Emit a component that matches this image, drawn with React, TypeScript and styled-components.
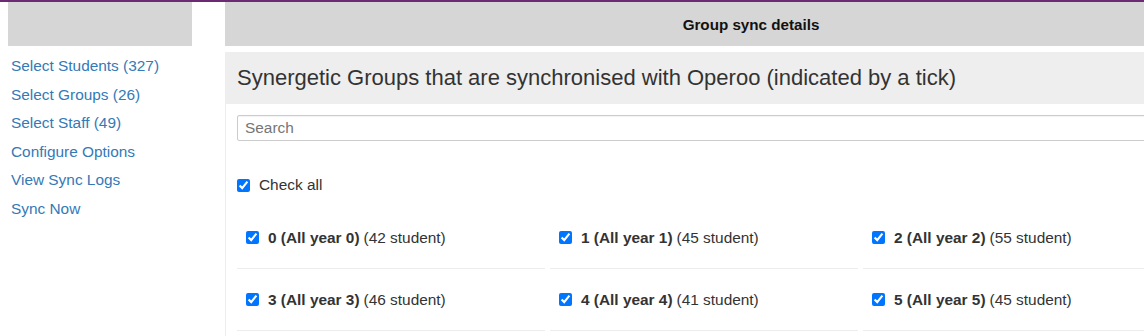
import React from "react";
import styled, { createGlobalStyle } from "styled-components";

const Global = createGlobalStyle`
  html, body { margin: 0; padding: 0; overflow: hidden; background: #fff; }
  body { font-family: "Liberation Sans", Arial, sans-serif; font-size: 15.4px; color: #333; }
`;

const TopBar = styled.div`
  height: 2px;
  background: #6c2a72;
`;

const Layout = styled.div`
  display: flex;
  align-items: flex-start;
  padding-left: 8px;
`;

const Sidebar = styled.nav`
  width: 184px;
  flex: none;
  margin-right: 33px;
`;

const SideHead = styled.div`
  height: 44px;
  background: #d6d6d6;
`;

const LinkList = styled.ul`
  list-style: none;
  margin: 6px 0 0;
  padding: 0;
`;

const SideLink = styled.a`
  display: block;
  padding-left: 3px;
  line-height: 28.6px;
  font-size: 15.4px;
  color: #337ab7;
  text-decoration: none;
  white-space: nowrap;
`;

const Main = styled.main`
  width: 1052px;
  flex: none;
`;

const PanelHead = styled.div`
  height: 44px;
  background: #d6d6d6;
  display: flex;
  align-items: center;
  justify-content: center;
  font-weight: bold;
  font-size: 15.2px;
  color: #111;
`;

const TitleBand = styled.h2`
  margin: 6px 0 0;
  height: 52px;
  background: #eeeeee;
  display: flex;
  align-items: center;
  padding-left: 12px;
  font-size: 22px;
  font-weight: normal;
  color: #333;
`;

const Body = styled.div`
  border-left: 1px solid #ececec;
  padding: 11px 0 10px 11px;
`;

const Search = styled.input`
  display: block;
  box-sizing: border-box;
  width: 1020px;
  height: 26px;
  border: 1px solid #cccccc;
  border-radius: 2px;
  padding: 0 7px;
  font-family: inherit;
  font-size: 15.4px;
  color: #333;
  box-shadow: inset 0 1px 1px rgba(0, 0, 0, 0.05);
  &::placeholder { color: #767676; }
`;

const CheckRow = styled.label`
  display: flex;
  align-items: center;
  height: 20px;
  margin-top: 34px;
  font-size: 15.4px;
  color: #333;
`;

const Box = styled.input.attrs({ type: "checkbox" })`
  width: 13px;
  height: 13px;
  margin: 0 9px 0 0;
  flex: none;
`;

const Grid = styled.div`
  display: grid;
  grid-template-columns: repeat(3, 308px);
  column-gap: 5px;
  margin-top: 12px;
`;

const Item = styled.label`
  display: flex;
  align-items: center;
  height: 61px;
  padding-left: 9px;
  border-bottom: 1px solid #ededed;
  font-size: 15.4px;
  color: #333;
  white-space: nowrap;
`;

const Strong = styled.b`
  font-weight: bold;
  margin-right: 4px;
`;

const links = [
  "Select Students (327)",
  "Select Groups (26)",
  "Select Staff (49)",
  "Configure Options",
  "View Sync Logs",
  "Sync Now",
];

const groups = [
  { y: 0, n: 42 },
  { y: 1, n: 45 },
  { y: 2, n: 55 },
  { y: 3, n: 46 },
  { y: 4, n: 41 },
  { y: 5, n: 45 },
];

export default function App() {
  return (
    <>
      <Global />
      <TopBar />
      <Layout>
        <Sidebar>
          <SideHead />
          <LinkList>
            {links.map((l) => (
              <li key={l}>
                <SideLink href="#">{l}</SideLink>
              </li>
            ))}
          </LinkList>
        </Sidebar>
        <Main>
          <PanelHead>Group sync details</PanelHead>
          <TitleBand>
            Synergetic Groups that are synchronised with Operoo (indicated by a tick)
          </TitleBand>
          <Body>
            <Search placeholder="Search" />
            <CheckRow>
              <Box defaultChecked />
              Check all
            </CheckRow>
            <Grid>
              {groups.map((g) => (
                <Item key={g.y}>
                  <Box defaultChecked />
                  <Strong>
                    {g.y} (All year {g.y})
                  </Strong>
                  ({g.n} student)
                </Item>
              ))}
            </Grid>
          </Body>
        </Main>
      </Layout>
    </>
  );
}
